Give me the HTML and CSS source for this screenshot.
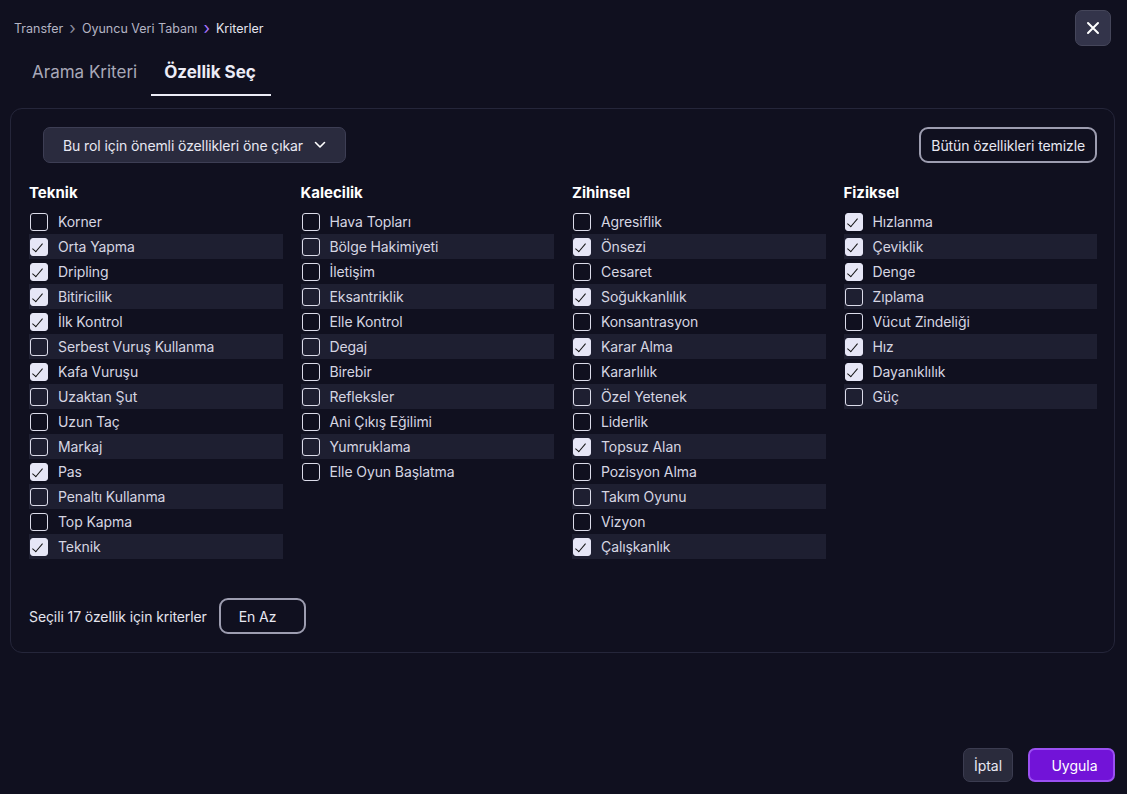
FILE: index.html
```html
<html>
    <head>
        <link rel="stylesheet" href="styles.css">
    </head>
<body>
    <div class="top">
        <div class="crumbs">
            <span>Transfer</span>
            <span class="sep">&#x203A;</span>
            <span>Oyuncu Veri Tabanı</span>
            <span class="sep last">&#x203A;</span>
            <span class="current">Kriterler</span>
        </div>
        <button class="closeBtn">
            <svg width="14" height="14" viewBox="0 0 14 14"><path d="M2 2 L12 12 M12 2 L2 12" stroke="#fff" stroke-width="2" stroke-linecap="round"/></svg>
        </button>
    </div>

    <div class="tabs">
        <div class="tab">Arama Kriteri</div>
        <div class="tab active">Özellik Seç</div>
    </div>

    <section class="panel">
        <div class="toolbar">
            <button class="dropBtn">Bu rol için önemli özellikleri öne çıkar
                <svg width="12" height="8" viewBox="0 0 12 8"><path d="M1.5 1.5 L6 6 L10.5 1.5" stroke="#fff" stroke-width="1.6" fill="none" stroke-linecap="round" stroke-linejoin="round"/></svg>
            </button>
            <button class="outlineBtn">Bütün özellikleri temizle</button>
        </div>

        <div class="cols">
            <div class="col">
                <h3>Teknik</h3>
                <div class="list">
                    <div class="row"><span class="box"></span>Korner</div>
                    <div class="row"><span class="box on"></span>Orta Yapma</div>
                    <div class="row"><span class="box on"></span>Dripling</div>
                    <div class="row"><span class="box on"></span>Bitiricilik</div>
                    <div class="row"><span class="box on"></span>İlk Kontrol</div>
                    <div class="row"><span class="box"></span>Serbest Vuruş Kullanma</div>
                    <div class="row"><span class="box on"></span>Kafa Vuruşu</div>
                    <div class="row"><span class="box"></span>Uzaktan Şut</div>
                    <div class="row"><span class="box"></span>Uzun Taç</div>
                    <div class="row"><span class="box"></span>Markaj</div>
                    <div class="row"><span class="box on"></span>Pas</div>
                    <div class="row"><span class="box"></span>Penaltı Kullanma</div>
                    <div class="row"><span class="box"></span>Top Kapma</div>
                    <div class="row"><span class="box on"></span>Teknik</div>
                </div>
            </div>
            <div class="col">
                <h3>Kalecilik</h3>
                <div class="list">
                    <div class="row"><span class="box"></span>Hava Topları</div>
                    <div class="row"><span class="box"></span>Bölge Hakimiyeti</div>
                    <div class="row"><span class="box"></span>İletişim</div>
                    <div class="row"><span class="box"></span>Eksantriklik</div>
                    <div class="row"><span class="box"></span>Elle Kontrol</div>
                    <div class="row"><span class="box"></span>Degaj</div>
                    <div class="row"><span class="box"></span>Birebir</div>
                    <div class="row"><span class="box"></span>Refleksler</div>
                    <div class="row"><span class="box"></span>Ani Çıkış Eğilimi</div>
                    <div class="row"><span class="box"></span>Yumruklama</div>
                    <div class="row"><span class="box"></span>Elle Oyun Başlatma</div>
                </div>
            </div>
            <div class="col">
                <h3>Zihinsel</h3>
                <div class="list">
                    <div class="row"><span class="box"></span>Agresiflik</div>
                    <div class="row"><span class="box on"></span>Önsezi</div>
                    <div class="row"><span class="box"></span>Cesaret</div>
                    <div class="row"><span class="box on"></span>Soğukkanlılık</div>
                    <div class="row"><span class="box"></span>Konsantrasyon</div>
                    <div class="row"><span class="box on"></span>Karar Alma</div>
                    <div class="row"><span class="box"></span>Kararlılık</div>
                    <div class="row"><span class="box"></span>Özel Yetenek</div>
                    <div class="row"><span class="box"></span>Liderlik</div>
                    <div class="row"><span class="box on"></span>Topsuz Alan</div>
                    <div class="row"><span class="box"></span>Pozisyon Alma</div>
                    <div class="row"><span class="box"></span>Takım Oyunu</div>
                    <div class="row"><span class="box"></span>Vizyon</div>
                    <div class="row"><span class="box on"></span>Çalışkanlık</div>
                </div>
            </div>
            <div class="col">
                <h3>Fiziksel</h3>
                <div class="list">
                    <div class="row"><span class="box on"></span>Hızlanma</div>
                    <div class="row"><span class="box on"></span>Çeviklik</div>
                    <div class="row"><span class="box on"></span>Denge</div>
                    <div class="row"><span class="box"></span>Zıplama</div>
                    <div class="row"><span class="box"></span>Vücut Zindeliği</div>
                    <div class="row"><span class="box on"></span>Hız</div>
                    <div class="row"><span class="box on"></span>Dayanıklılık</div>
                    <div class="row"><span class="box"></span>Güç</div>
                </div>
            </div>
        </div>

        <div class="summary">
            <span>Seçili 17 özellik için kriterler</span>
            <button class="outlineBtn minBtn">En Az</button>
        </div>
    </section>

    <div class="footer">
        <button class="cancelBtn">İptal</button>
        <button class="applyBtn">Uygula</button>
    </div>
</body>
</html>
```

FILE: styles.css
```css
* {
    font-family: Inter, "Noto Sans", sans-serif;
    box-sizing: border-box;
}
body {
    margin: 0;
    background: #10101f;
    color: #d8d8e4;
    height: 794px;
    overflow: hidden;
}
button {
    cursor: pointer;
    color: #e8e8f2;
    font-size: 14px;
}

/* header */
.top {
    display: flex;
    justify-content: space-between;
    align-items: flex-start;
    padding: 10px 16px 0 14px;
}
.crumbs {
    margin-top: 11px;
    line-height: 16px;
    font-size: 12.5px;
    color: #b4b4c4;
    display: flex;
    gap: 6px;
}
.crumbs .sep {
    font-size: 17px;
    line-height: 14px;
    color: #8a8a9c;
}
.crumbs .sep.last {
    color: #a974ff;
}
.crumbs .current {
    color: #e4e4ee;
}
.closeBtn {
    width: 36px;
    height: 36px;
    border-radius: 7px;
    border: 1px solid #45465a;
    background: #33344a;
    display: flex;
    align-items: center;
    justify-content: center;
}

.tabs {
    display: flex;
    margin: 6px 0 0 18px;
}
.tab {
    padding: 8px 14px 10px;
    line-height: 24px;
    font-size: 17px;
    color: #a8a8b8;
    border-bottom: 2px solid transparent;
}
.tab.active {
    padding: 8px 15px 10px 13px;
    color: #ececf6;
    font-weight: 700;
    border-bottom-color: #ececf6;
}

/* panel */
.panel {
    margin: 12px 12px 0 10px;
    border: 1px solid #25263a;
    border-radius: 12px;
    padding: 18px 17px 18px 18px;
}
.toolbar {
    display: flex;
    justify-content: space-between;
    align-items: center;
}
.dropBtn {
    margin-left: 14px;
    height: 36px;
    padding: 0 19px;
    background: #2a2b3e;
    border: 1px solid #3d3e54;
    border-radius: 7px;
    display: flex;
    align-items: center;
    gap: 11px;
    letter-spacing: -0.1px;
}
.outlineBtn {
    height: 36px;
    padding: 0 10px;
    background: transparent;
    border: 2px solid #9d9db0;
    border-radius: 9px;
    letter-spacing: -0.1px;
}

.cols {
    display: grid;
    grid-template-columns: repeat(4, 1fr);
    column-gap: 18px;
    margin-top: 19px;
}
.col h3 {
    margin: 0 0 5px;
    font-size: 15px;
    line-height: 22px;
    color: #fff;
}
.row {
    height: 25px;
    display: flex;
    align-items: center;
    gap: 10px;
    padding-left: 1px;
    font-size: 14px;
    letter-spacing: -0.1px;
    color: #d6d6e2;
}
.row:nth-child(even) {
    background: #1e1f31;
}
.box {
    width: 18px;
    height: 18px;
    border: 1.5px solid #dcdcea;
    border-radius: 3px;
    position: relative;
    flex-shrink: 0;
}
.box.on {
    background: #e6e6f6;
    border-color: #e6e6f6;
}
.box.on::after {
    content: "";
    position: absolute;
    left: 4px;
    top: 2px;
    width: 4px;
    height: 10px;
    border-right: 1.6px solid #111;
    border-bottom: 1.6px solid #111;
    transform: rotate(40deg);
}

.summary {
    margin-top: 39px;
    display: flex;
    align-items: center;
    gap: 12px;
    font-size: 14px;
    letter-spacing: -0.1px;
    color: #e4e4ee;
}
.minBtn {
    width: 87px;
    text-align: left;
    padding-left: 18px;
}

/* footer */
.footer {
    display: flex;
    justify-content: flex-end;
    gap: 15px;
    margin: 95px 12px 0 0;
}
.cancelBtn {
    height: 34px;
    width: 50px;
    padding: 0;
    background: #2a2b3c;
    border: 1px solid #3b3c50;
    border-radius: 7px;
}
.applyBtn {
    height: 34px;
    width: 87px;
    padding-left: 12px;
    background: #7213d8;
    border: 2px solid #9b50f2;
    border-radius: 7px;
    color: #fff;
}
```
